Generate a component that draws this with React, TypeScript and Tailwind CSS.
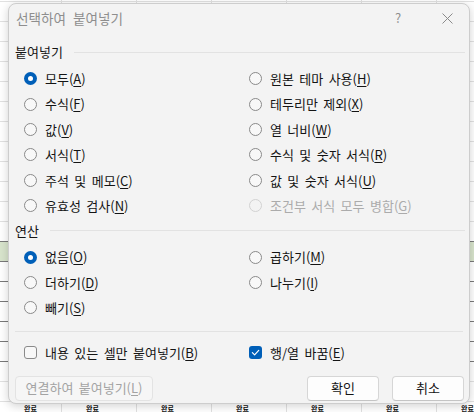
import type { ReactNode } from 'react'

const font = "font-['Noto_Sans_CJK_KR','Noto_Sans',sans-serif]"

type Opt = { text: string; hot: string; checked?: boolean; disabled?: boolean }

const pasteLeft: Opt[] = [
  { text: '모두', hot: 'A', checked: true },
  { text: '수식', hot: 'F' },
  { text: '값', hot: 'V' },
  { text: '서식', hot: 'T' },
  { text: '주석 및 메모', hot: 'C' },
  { text: '유효성 검사', hot: 'N' },
]

const pasteRight: Opt[] = [
  { text: '원본 테마 사용', hot: 'H' },
  { text: '테두리만 제외', hot: 'X' },
  { text: '열 너비', hot: 'W' },
  { text: '수식 및 숫자 서식', hot: 'R' },
  { text: '값 및 숫자 서식', hot: 'U' },
  { text: '조건부 서식 모두 병합', hot: 'G', disabled: true },
]

const ops: (Opt | null)[] = [
  { text: '없음', hot: 'O', checked: true },
  { text: '곱하기', hot: 'M' },
  { text: '더하기', hot: 'D' },
  { text: '나누기', hot: 'I' },
  { text: '빼기', hot: 'S' },
  null,
]

function Label({ text, hot }: { text: string; hot: string }) {
  return (
    <span className="whitespace-nowrap">
      {text}(<span className="underline underline-offset-2">{hot}</span>)
    </span>
  )
}

function Radio({ opt }: { opt: Opt }) {
  return (
    <div className={`flex items-center gap-[8px] h-[25.4px] ${opt.disabled ? 'text-[#ababab]' : 'text-[#141414]'}`}>
      {opt.checked ? (
        <span className="w-[13px] h-[13px] rounded-full bg-[#005fb8] flex items-center justify-center shrink-0">
          <span className="w-[5px] h-[5px] rounded-full bg-white" />
        </span>
      ) : (
        <span
          className={`w-[13px] h-[13px] rounded-full border shrink-0 ${
            opt.disabled ? 'border-[#d2d2d2] bg-[#f3f3f3]' : 'border-[#8a8a8a] bg-[#f8f8f8]'
          }`}
        />
      )}
      <Label text={opt.text} hot={opt.hot} />
    </div>
  )
}

function Check({ opt }: { opt: Opt }) {
  return (
    <div className="flex items-center gap-[8px] h-[24px] text-[#141414]">
      {opt.checked ? (
        <span className="w-[13px] h-[13px] rounded-[3px] bg-[#005fb8] flex items-center justify-center shrink-0">
          <svg width="9" height="9" viewBox="0 0 10 10" fill="none">
            <path d="M1.5 5.2 L4 7.6 L8.6 2.6" stroke="white" strokeWidth="1.3" strokeLinecap="round" strokeLinejoin="round" />
          </svg>
        </span>
      ) : (
        <span className="w-[13px] h-[13px] rounded-[3px] border border-[#8a8a8a] bg-[#f8f8f8] shrink-0" />
      )}
      <Label text={opt.text} hot={opt.hot} />
    </div>
  )
}

function Section({ title }: { title: string }) {
  return (
    <div className="flex items-center gap-[11px] h-[20px] pl-[6px] pr-[4px] text-[#141414]">
      <span>{title}</span>
      <div className="flex-1 h-px bg-[#e2e2e2]" />
    </div>
  )
}

function Sheet() {
  const rows = Array.from({ length: 23 }, (_, i) => i)
  const cols = [62, 75, 75, 75, 75, 75, 75]
  return (
    <div className="flex flex-col -mt-[18px]">
      {rows.map((r) => (
        <div
          key={r}
          className={`flex h-[20px] border-b ${r === 13 ? 'bg-[#d8e4cc]' : 'bg-white'} ${
            r >= 12 && r <= 18 ? 'border-[#7a7a7a]' : 'border-[#e1e1e1]'
          }`}
        >
          {cols.map((w, c) => (
            <div
              key={c}
              style={{ width: w }}
              className="shrink-0 border-r border-[#e1e1e1] text-[7px] leading-[7px] pt-[3px] pl-[24px] font-bold text-[#111] overflow-hidden whitespace-nowrap"
            >
              {r === 21 ? '완료' : ''}
            </div>
          ))}
        </div>
      ))}
    </div>
  )
}

export default function App() {
  return (
    <div className={`relative w-[474px] h-[412px] overflow-hidden bg-white text-[13px] [word-spacing:2.5px] ${font}`}>
      <Sheet />

      {/* dialog */}
      <div className="absolute left-[8px] top-[3px] w-[462px] h-[401px] rounded-[8px] bg-[#f3f3f3] border border-[#cdcdcd] shadow-[0_2px_10px_rgba(0,0,0,0.18)] flex flex-col">
        <div className="h-[28px] flex items-center pl-[7px] text-[#8e8e8e]">
          <span className="flex-1 text-[13.6px] [word-spacing:4px]">선택하여 붙여넣기</span>
          <span className="w-[12px] text-center mr-[38px]">?</span>
          <svg width="11" height="11" viewBox="0 0 11 11" className="mr-[16px]">
            <path d="M0.5 0.5 L10.5 10.5 M10.5 0.5 L0.5 10.5" stroke="#8a8a8a" strokeWidth="1" />
          </svg>
        </div>

        <div className="mt-[10px]">
          <Section title="붙여넣기" />
        </div>
        <div className="mt-[4px] pl-[15px] grid grid-cols-[225px_1fr]">
          {pasteLeft.map((l, i) => (
            <div key={i} className="contents">
              <Radio opt={l} />
              <Radio opt={pasteRight[i]} />
            </div>
          ))}
        </div>

        <div className="mt-[2px]">
          <Section title="연산" />
        </div>
        <div className="mt-[4px] pl-[15px] grid grid-cols-[225px_1fr]">
          {ops.map((o, i) => (o ? <Radio key={i} opt={o} /> : <div key={i} />))}
        </div>

        <div className="mt-[10px] mx-[6px] h-px bg-[#e2e2e2]" />

        <div className="mt-[9px] pl-[15px] grid grid-cols-[225px_1fr]">
          <Check opt={{ text: '내용 있는 셀만 붙여넣기', hot: 'B' }} />
          <Check opt={{ text: '행/열 바꿈', hot: 'E', checked: true }} />
        </div>

        <div className="mt-[11px] flex items-center pl-[6px] pr-[5px]">
          <div className="w-[138px] h-[25px] rounded-[4px] border border-[#e3e3e3] bg-[#f6f6f6] text-[#a3a3a3] flex items-center justify-center">
            <Label text="연결하여 붙여넣기" hot="L" />
          </div>
          <div className="flex-1" />
          <button className="w-[72px] h-[25px] rounded-[4px] border border-[#d6d6d6] border-b-[#c4c4c4] bg-[#fdfdfd] text-[#141414]">
            확인
          </button>
          <button className="ml-[13px] w-[72px] h-[25px] rounded-[4px] border border-[#d6d6d6] border-b-[#c4c4c4] bg-[#fdfdfd] text-[#141414]">
            취소
          </button>
        </div>
      </div>
    </div>
  )
}
